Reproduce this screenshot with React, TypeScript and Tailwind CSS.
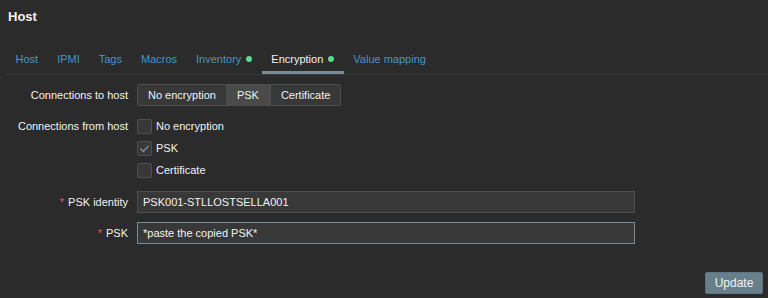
import React from 'react';

const tabs = [
  { name: 'Host' },
  { name: 'IPMI' },
  { name: 'Tags' },
  { name: 'Macros' },
  { name: 'Inventory', dot: true },
  { name: 'Encryption', dot: true, active: true },
  { name: 'Value mapping' },
];

function Checkbox({ checked, label }: { checked?: boolean; label: string }) {
  return (
    <label className="flex items-center h-[22px] gap-[4px]">
      <span className="w-[15px] h-[15px] border border-[#4f4f4f] bg-[#383838] rounded-[2px] flex items-center justify-center">
        {checked && (
          <svg width="11" height="11" viewBox="0 0 12 12" fill="none">
            <path d="M2 6.5l2.7 2.7L10 3.5" stroke="#768d99" strokeWidth="1.6" strokeLinecap="round" strokeLinejoin="round" />
          </svg>
        )}
      </span>
      <span>{label}</span>
    </label>
  );
}

function Row({ label, required, children, className = '' }: { label?: string; required?: boolean; children: React.ReactNode; className?: string }) {
  return (
    <div className={`flex ${className}`}>
      <div className="w-[137px] shrink-0 pr-[9px] text-right h-[22px] leading-[22px] whitespace-nowrap">
        {required && <span className="text-[#e45959] mr-[4px]">*</span>}
        {label}
      </div>
      <div className="flex-1">{children}</div>
    </div>
  );
}

export default function App() {
  return (
    <div className="w-[768px] h-[298px] bg-[#2b2b2b] text-[#f2f2f2] text-[11px] font-['Liberation_Sans',Arial,sans-serif] overflow-hidden">
      <div className="h-[48px] pl-[8px] pt-[9px]">
        <h1 className="text-[13px] font-bold leading-[16px]">Host</h1>
      </div>

      <div className="flex ml-[6px] border-b border-[#383838]">
        {tabs.map(t => (
          <div
            key={t.name}
            className={`h-[26px] px-[9.5px] flex items-center border-b-[3px] pb-[1px] whitespace-nowrap ${
              t.active ? 'border-[#768d99] text-[#f2f2f2]' : 'border-transparent text-[#4796c4]'
            }`}
          >
            {t.name}
            {t.dot && <span className="ml-[5px] w-[6px] h-[6px] rounded-full bg-[#59db8f]" />}
          </div>
        ))}
      </div>

      <div className="mt-[9px] flex flex-col">
        <Row label="Connections to host">
          <div className="inline-flex h-[22px] border border-[#4f4f4f] rounded-[2px] overflow-hidden whitespace-nowrap">
            <span className="px-[10px] flex items-center bg-[#383838]">No encryption</span>
            <span className="px-[11px] flex items-center bg-[#4a4a4a]">PSK</span>
            <span className="px-[10px] flex items-center bg-[#383838] border-l border-[#4f4f4f]">Certificate</span>
          </div>
        </Row>

        <Row label="Connections from host" className="mt-[9px]">
          <Checkbox label="No encryption" />
          <Checkbox label="PSK" checked />
          <Checkbox label="Certificate" />
        </Row>

        <Row label="PSK identity" required className="mt-[10px]">
          <div className="w-[498px] h-[22px] border border-[#4f4f4f] bg-[#383838] px-[5px] flex items-center">
            PSK001-STLLOSTSELLA001
          </div>
        </Row>

        <Row label="PSK" required className="mt-[9px]">
          <div className="w-[498px] h-[22px] border border-[#768d99] bg-[#383838] px-[5px] flex items-center">
            *paste the copied PSK*
          </div>
        </Row>
      </div>

      <div className="flex justify-end pr-[5px] mt-[28px]">
        <button className="w-[58px] h-[22px] bg-[#697f8c] border border-[#5e7480] rounded-[2px] text-[#f2f2f2] text-[12px]">Update</button>
      </div>
    </div>
  );
}
